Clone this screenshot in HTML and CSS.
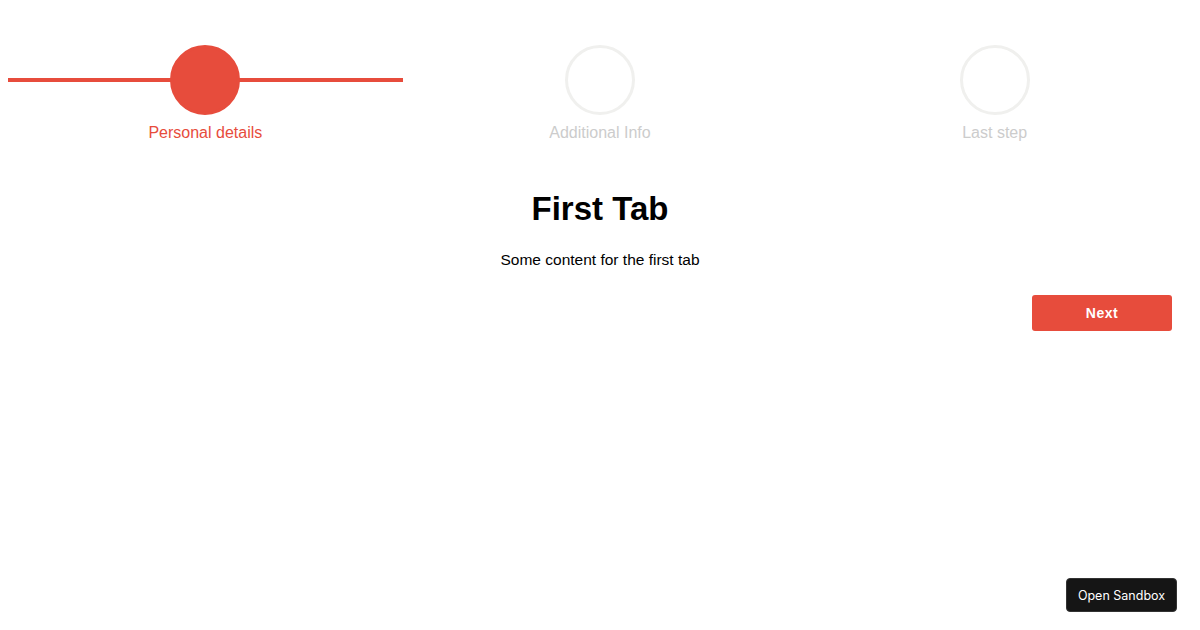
FILE: index.html
```html
<!DOCTYPE html>
<html>
<head>
<meta charset="utf-8">
<link rel="stylesheet" href="styles.css">
</head>
<body>
<div class="wizard">
  <div class="steps">
    <div class="step active">
      <div class="circle-row"><span class="circle"></span></div>
      <div class="label">Personal details</div>
    </div>
    <div class="step">
      <div class="circle-row"><span class="circle"></span></div>
      <div class="label">Additional Info</div>
    </div>
    <div class="step">
      <div class="circle-row"><span class="circle"></span></div>
      <div class="label">Last step</div>
    </div>
  </div>
  <div class="content">
    <h2 class="title">First Tab</h2>
    <p class="text">Some content for the first tab</p>
  </div>
  <div class="actions">
    <button class="next">Next</button>
  </div>
</div>
<a class="sandbox">Open Sandbox</a>
</body>
</html>
```
FILE: styles.css
```css
html, body {
  background: #fff;
}
body {
  margin: 8px;
  font-family: "Liberation Sans", Arial, sans-serif;
  color: #000;
}
.wizard {
  padding-top: 37px;
}
.steps {
  display: grid;
  grid-template-columns: repeat(3, 1fr);
}
.step {
  display: flex;
  flex-direction: column;
  align-items: center;
}
.circle-row {
  position: relative;
  width: 100%;
  display: flex;
  justify-content: center;
}
.step.active .circle-row::before {
  content: "";
  position: absolute;
  left: 0;
  right: 0;
  top: 33px;
  height: 4px;
  background: #e74c3c;
}
.circle {
  position: relative;
  width: 70px;
  height: 70px;
  box-sizing: border-box;
  border-radius: 50%;
  border: 3px solid #f0f0ee;
  background: #fff;
}
.step.active .circle {
  background: #e74c3c;
  border-color: #e74c3c;
}
.label {
  margin-top: 9px;
  font-size: 16px;
  line-height: 18px;
  color: #cccccc;
}
.step.active .label {
  color: #e74c3c;
}
.content {
  text-align: center;
}
.title {
  margin: 48px 0 0;
  font-size: 33px;
  line-height: 37px;
  font-weight: bold;
}
.text {
  margin: 24px 0 0;
  font-size: 15.5px;
  line-height: 18px;
}
.actions {
  display: flex;
  justify-content: flex-end;
  padding-right: 20px;
  margin-top: 26px;
}
.next {
  width: 140px;
  height: 36px;
  border: none;
  border-radius: 3px;
  background: #e74c3c;
  color: #fff;
  font-family: "Liberation Sans", Arial, sans-serif;
  font-weight: bold;
  font-size: 14px;
  letter-spacing: 0.5px;
}
.sandbox {
  position: fixed;
  right: 23px;
  bottom: 18px;
  width: 111px;
  height: 34px;
  box-sizing: border-box;
  display: flex;
  align-items: center;
  justify-content: center;
  background: #151515;
  border: 1px solid #333;
  border-radius: 4px;
  color: #fff;
  font-family: Inter, "Liberation Sans", sans-serif;
  font-size: 12.5px;
}
```
